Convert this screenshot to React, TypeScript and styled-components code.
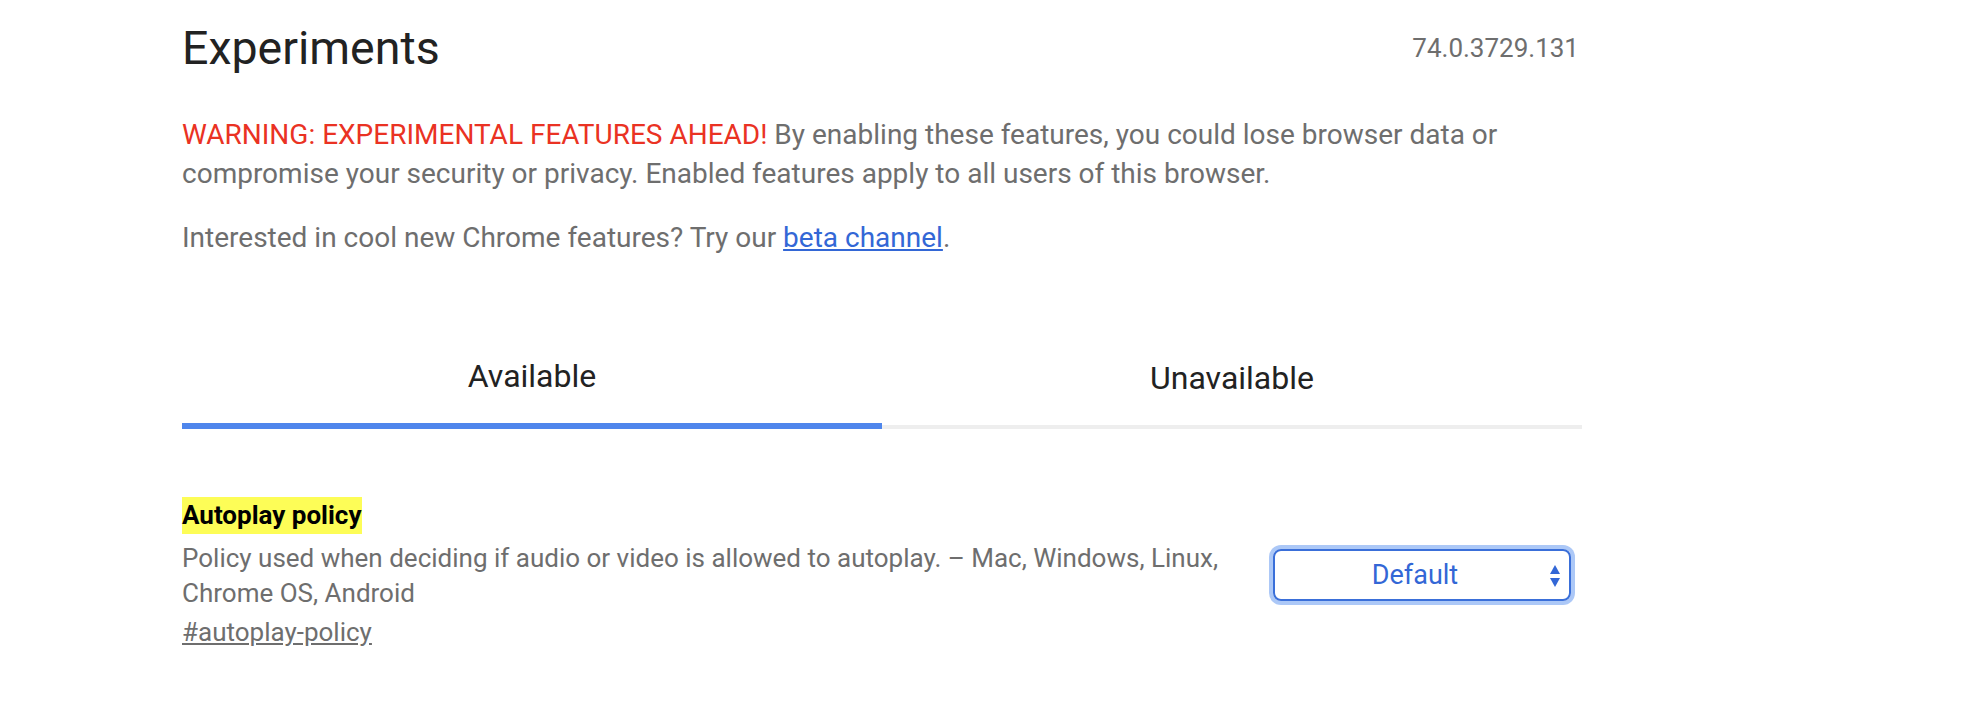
import styled, { createGlobalStyle } from "styled-components";

const GlobalStyle = createGlobalStyle`
  html, body {
    margin: 0;
    padding: 0;
    background: #ffffff;
  }
  body {
    font-family: Roboto, "Noto Sans", "Liberation Sans", sans-serif;
    color: #6e6e6e;
  }
`;

const Page = styled.div`
  width: 1400px;
  padding: 20px 0 0 182px;
`;

const Header = styled.header`
  display: flex;
  justify-content: space-between;
  align-items: flex-start;
`;

const Title = styled.h1`
  margin: 0;
  font-size: 46.5px;
  line-height: 56px;
  font-weight: 400;
  color: #222222;
`;

const Version = styled.span`
  margin-top: 13px;
  margin-right: 3px;
  font-size: 26px;
  line-height: 30px;
  color: #6e6e6e;
`;

const Text = styled.p<{ $gap: number }>`
  margin: ${(p) => p.$gap}px 0 0;
  font-size: 28px;
  line-height: 39px;
`;

const Warning = styled.span`
  color: #ea3223;
`;

const Link = styled.a`
  color: #3367d6;
  text-decoration: underline;
`;

const TabBar = styled.div`
  display: flex;
  align-items: flex-end;
  margin-top: 101px;
`;

const Tab = styled.div<{ $active?: boolean }>`
  flex: 1;
  text-align: center;
  font-size: 32px;
  line-height: 36px;
  color: #222222;
  padding-bottom: 29px;
  border-bottom: ${(p) => (p.$active ? "6px solid #4f86ec" : "4px solid #eeeeee")};
`;

const Feature = styled.div`
  display: flex;
  align-items: center;
  margin-top: 68px;
`;

const FeatureText = styled.div`
  width: 1060px;
`;

const FeatureName = styled.span`
  display: inline-block;
  font-size: 26px;
  line-height: 37px;
  font-weight: 700;
  color: #000000;
  background: #fdfd57;
`;

const Description = styled.div`
  margin-top: 7px;
  font-size: 26px;
  line-height: 35px;
`;

const Permalink = styled.a`
  display: block;
  margin-top: 4px;
  font-size: 26px;
  line-height: 35px;
  color: #6e6e6e;
  text-decoration: underline;
`;

const Select = styled.div`
  position: relative;
  box-sizing: border-box;
  width: 298px;
  height: 52px;
  margin: 2px 11px 0 auto;
  padding-right: 14px;
  border: 2px solid #3a6fd9;
  border-radius: 8px;
  box-shadow: 0 0 0 4px rgba(90, 145, 240, 0.5);
  display: flex;
  align-items: center;
  justify-content: center;
  font-size: 27px;
  color: #3367d6;
`;

const Arrows = styled.svg`
  position: absolute;
  right: 8px;
  top: 13px;
`;

export default function App() {
  return (
    <>
      <GlobalStyle />
      <Page>
        <Header>
          <Title>Experiments</Title>
          <Version>74.0.3729.131</Version>
        </Header>
        <Text $gap={39}>
          <Warning>WARNING: EXPERIMENTAL FEATURES AHEAD!</Warning> By enabling these
          features, you could lose browser data or compromise your security or privacy.
          Enabled features apply to all users of this browser.
        </Text>
        <Text $gap={25}>
          Interested in cool new Chrome features? Try our{" "}
          <Link href="#">beta channel</Link>.
        </Text>
        <TabBar>
          <Tab $active>Available</Tab>
          <Tab>Unavailable</Tab>
        </TabBar>
        <Feature>
          <FeatureText>
            <FeatureName>Autoplay policy</FeatureName>
            <Description>
              Policy used when deciding if audio or video is allowed to autoplay. – Mac,
              Windows, Linux, Chrome OS, Android
            </Description>
            <Permalink href="#">#autoplay-policy</Permalink>
          </FeatureText>
          <Select>
            Default
            <Arrows width="12" height="24" viewBox="0 0 12 24">
              <path d="M6 1 L11 10 L1 10 Z" fill="#3367d6" />
              <path d="M1 14 L11 14 L6 23 Z" fill="#3367d6" />
            </Arrows>
          </Select>
        </Feature>
      </Page>
    </>
  );
}
